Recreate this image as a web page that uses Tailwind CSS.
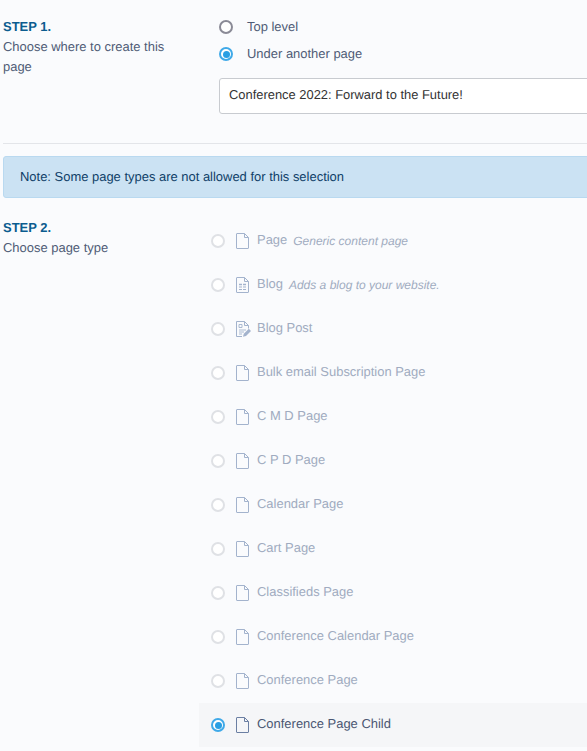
<!DOCTYPE html>
<html>
<head>
<meta charset="utf-8">
<script src="https://cdn.jsdelivr.net/npm/@tailwindcss/browser@4"></script>
</head>
<body class="m-0 overflow-hidden">
<div class="w-[587px] h-[751px] overflow-hidden bg-[#fafbfd] font-['Liberation_Sans',Arial,sans-serif] text-[12.96px] text-[#4f5b76] [text-rendering:geometricPrecision]">
  <div class="pl-[3px] pt-[17px]">
    <div class="flex h-[127px] border-b border-[#e3e5e9]">
      <div class="w-[216px] shrink-0">
        <div class="font-bold text-[#0b5c8f] leading-[20px]">STEP 1.</div>
        <div class="w-[180px] leading-[20px]">Choose where to create this page</div>
      </div>
      <div class="flex-1">
        <label class="flex items-center h-[20px] gap-[14px]">
          <span class="w-[14px] h-[14px] rounded-full border-2 border-[#8a8a96] bg-white"></span>
          <span>Top level</span>
        </label>
        <label class="flex items-center h-[20px] gap-[14px] mt-[7px]">
          <span class="w-[14px] h-[14px] rounded-full border-2 border-[#3fa9e8] bg-white flex items-center justify-center"><span class="w-[7px] h-[7px] rounded-full bg-[#2a9fe3] shrink-0"></span></span>
          <span>Under another page</span>
        </label>
        <div class="mt-[14px] h-[36px] w-[400px] bg-white border border-[#c8cbd0] rounded-[3px] px-[9px] flex items-center pb-[2px] text-[12.92px] text-[#333333]">Conference 2022: Forward to the Future!</div>
      </div>
    </div>
    <div class="mt-[12px] h-[42px] w-[620px] bg-[#cbe2f3] border border-[#b9d9f0] rounded-[3px] pl-[16px] flex items-center pb-[1px] text-[#0f3f68]">Note: Some page types are not allowed for this selection</div>
    <div class="flex mt-[20px]">
      <div class="w-[196px] shrink-0">
        <div class="font-bold text-[#0b5c8f] leading-[20px]">STEP 2.</div>
        <div class="leading-[20px]">Choose page type</div>
      </div>
      <div class="flex-1 mt-[1px] text-[#a0abc0]">
        <div class="flex items-center h-[44px] pl-[12px]">
          <span class="w-[14px] h-[14px] rounded-full border-2 border-[#dfe1e5] bg-white"></span>
          <svg class="ml-[11px] w-[13px] h-[16px]" viewBox="0 0 13 16" fill="none" stroke="#a3b3cd"><path d="M.5 1a.5.500 0 0 1 .5-.5h7.500l4 4v10.500a.5.500 0 0 1-.5.500h-11a.5.500 0 0 1-.5-.5z M8.500.5v4h4"/></svg>
          <span class="ml-[8px] -mt-[3px]">Page</span>
          <span class="ml-[6px] italic text-[12px] -mt-[1px]">Generic content page</span>
        </div>
        <div class="flex items-center h-[44px] pl-[12px]">
          <span class="w-[14px] h-[14px] rounded-full border-2 border-[#dfe1e5] bg-white"></span>
          <svg class="ml-[11px] w-[13px] h-[16px]" viewBox="0 0 13 16" fill="none" stroke="#a3b3cd"><path d="M.5 1a.5.500 0 0 1 .5-.5h7.500l4 4v10.500a.5.500 0 0 1-.5.500h-11a.5.500 0 0 1-.5-.5z M8.500.5v4h4"/><path d="M3 7.500h3M7 7.500h3" stroke-width="1.500"/><path d="M3 10h3M7 10h3M3 12.500h3M7 12.500h3" stroke-width="1"/></svg>
          <span class="ml-[8px] -mt-[3px]">Blog</span>
          <span class="ml-[6px] italic text-[12px] -mt-[1px]">Adds a blog to your website.</span>
        </div>
        <div class="flex items-center h-[44px] pl-[12px]">
          <span class="w-[14px] h-[14px] rounded-full border-2 border-[#dfe1e5] bg-white"></span>
          <svg class="ml-[11px] w-[14px] h-[16px] mr-[-1px] overflow-visible" viewBox="0 0 14 16" fill="none" stroke="#a3b3cd"><path d="M6 15.500h-5.500v-15h8l4 4v3 M8.500.5v4h4"/><path d="M3 3.500h3v3h-3zM3 9h7M3 11h5M3 13h3" stroke-width=".9"/><path d="M7 15.800l.8-3 5-5 2.200 2.200-5 5z" fill="#a3b3cd" stroke="none"/></svg>
          <span class="ml-[8px] -mt-[3px]">Blog Post</span>
        </div>
        <div class="flex items-center h-[44px] pl-[12px]">
          <span class="w-[14px] h-[14px] rounded-full border-2 border-[#dfe1e5] bg-white"></span>
          <svg class="ml-[11px] w-[13px] h-[16px]" viewBox="0 0 13 16" fill="none" stroke="#a3b3cd"><path d="M.5 1a.5.500 0 0 1 .5-.5h7.500l4 4v10.500a.5.500 0 0 1-.5.500h-11a.5.500 0 0 1-.5-.5z M8.500.5v4h4"/></svg>
          <span class="ml-[8px] -mt-[3px]">Bulk email Subscription Page</span>
        </div>
        <div class="flex items-center h-[44px] pl-[12px]">
          <span class="w-[14px] h-[14px] rounded-full border-2 border-[#dfe1e5] bg-white"></span>
          <svg class="ml-[11px] w-[13px] h-[16px]" viewBox="0 0 13 16" fill="none" stroke="#a3b3cd"><path d="M.5 1a.5.500 0 0 1 .5-.5h7.500l4 4v10.500a.5.500 0 0 1-.5.500h-11a.5.500 0 0 1-.5-.5z M8.500.5v4h4"/></svg>
          <span class="ml-[8px] -mt-[3px]">C M D Page</span>
        </div>
        <div class="flex items-center h-[44px] pl-[12px]">
          <span class="w-[14px] h-[14px] rounded-full border-2 border-[#dfe1e5] bg-white"></span>
          <svg class="ml-[11px] w-[13px] h-[16px]" viewBox="0 0 13 16" fill="none" stroke="#a3b3cd"><path d="M.5 1a.5.500 0 0 1 .5-.5h7.500l4 4v10.500a.5.500 0 0 1-.5.500h-11a.5.500 0 0 1-.5-.5z M8.500.5v4h4"/></svg>
          <span class="ml-[8px] -mt-[3px]">C P D Page</span>
        </div>
        <div class="flex items-center h-[44px] pl-[12px]">
          <span class="w-[14px] h-[14px] rounded-full border-2 border-[#dfe1e5] bg-white"></span>
          <svg class="ml-[11px] w-[13px] h-[16px]" viewBox="0 0 13 16" fill="none" stroke="#a3b3cd"><path d="M.5 1a.5.500 0 0 1 .5-.5h7.500l4 4v10.500a.5.500 0 0 1-.5.500h-11a.5.500 0 0 1-.5-.5z M8.500.5v4h4"/></svg>
          <span class="ml-[8px] -mt-[3px]">Calendar Page</span>
        </div>
        <div class="flex items-center h-[44px] pl-[12px]">
          <span class="w-[14px] h-[14px] rounded-full border-2 border-[#dfe1e5] bg-white"></span>
          <svg class="ml-[11px] w-[13px] h-[16px]" viewBox="0 0 13 16" fill="none" stroke="#a3b3cd"><path d="M.5 1a.5.500 0 0 1 .5-.5h7.500l4 4v10.500a.5.500 0 0 1-.5.500h-11a.5.500 0 0 1-.5-.5z M8.500.5v4h4"/></svg>
          <span class="ml-[8px] -mt-[3px]">Cart Page</span>
        </div>
        <div class="flex items-center h-[44px] pl-[12px]">
          <span class="w-[14px] h-[14px] rounded-full border-2 border-[#dfe1e5] bg-white"></span>
          <svg class="ml-[11px] w-[13px] h-[16px]" viewBox="0 0 13 16" fill="none" stroke="#a3b3cd"><path d="M.5 1a.5.500 0 0 1 .5-.5h7.500l4 4v10.500a.5.500 0 0 1-.5.500h-11a.5.500 0 0 1-.5-.5z M8.500.5v4h4"/></svg>
          <span class="ml-[8px] -mt-[3px]">Classifieds Page</span>
        </div>
        <div class="flex items-center h-[44px] pl-[12px]">
          <span class="w-[14px] h-[14px] rounded-full border-2 border-[#dfe1e5] bg-white"></span>
          <svg class="ml-[11px] w-[13px] h-[16px]" viewBox="0 0 13 16" fill="none" stroke="#a3b3cd"><path d="M.5 1a.5.500 0 0 1 .5-.5h7.500l4 4v10.500a.5.500 0 0 1-.5.500h-11a.5.500 0 0 1-.5-.5z M8.500.5v4h4"/></svg>
          <span class="ml-[8px] -mt-[3px]">Conference Calendar Page</span>
        </div>
        <div class="flex items-center h-[44px] pl-[12px]">
          <span class="w-[14px] h-[14px] rounded-full border-2 border-[#dfe1e5] bg-white"></span>
          <svg class="ml-[11px] w-[13px] h-[16px]" viewBox="0 0 13 16" fill="none" stroke="#a3b3cd"><path d="M.5 1a.5.500 0 0 1 .5-.5h7.500l4 4v10.500a.5.500 0 0 1-.5.500h-11a.5.500 0 0 1-.5-.5z M8.500.5v4h4"/></svg>
          <span class="ml-[8px] -mt-[3px]">Conference Page</span>
        </div>
        <div class="flex items-center h-[44px] pl-[12px] bg-[#f5f6f8] text-[#4a5672]">
          <span class="w-[14px] h-[14px] rounded-full border-2 border-[#3fa9e8] bg-white flex items-center justify-center"><span class="w-[7px] h-[7px] rounded-full bg-[#2a9fe3] shrink-0"></span></span>
          <svg class="ml-[11px] w-[13px] h-[16px]" viewBox="0 0 13 16" fill="none" stroke="#6b7fa3"><path d="M.5 1a.5.500 0 0 1 .5-.5h7.500l4 4v10.500a.5.500 0 0 1-.5.500h-11a.5.500 0 0 1-.5-.5z M8.500.5v4h4"/></svg>
          <span class="ml-[8px] -mt-[3px]">Conference Page Child</span>
        </div>
      </div>
    </div>
  </div>
</div>
</body>
</html>
